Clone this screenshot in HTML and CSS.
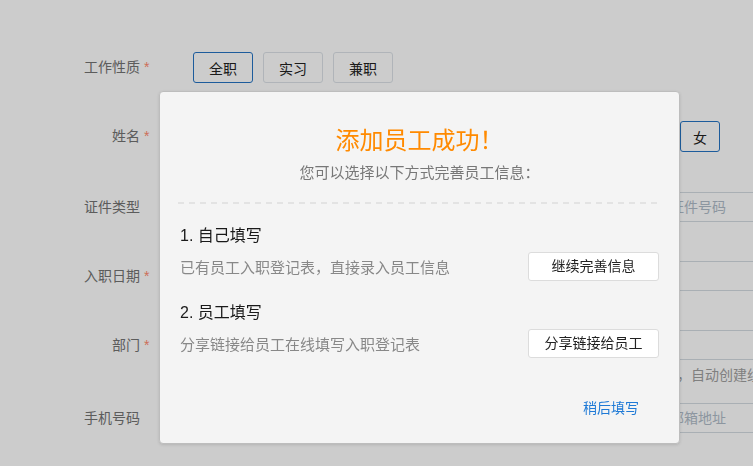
FILE: index.html
```html
<!DOCTYPE html>
<html lang="zh-CN">
<head>
    <meta charset="UTF-8">
    <meta name="viewport" content="width=device-width, initial-scale=1.0">
    <title>添加员工</title>
    <link rel="stylesheet" href="styles.css">
</head>
<body>
    <div class="form">
        <div class="row">
            <label class="label">工作性质</label><span class="star">*</span>
            <div class="field">
                <button class="opt active">全职</button>
                <button class="opt">实习</button>
                <button class="opt">兼职</button>
            </div>
        </div>
        <div class="row row-name">
            <label class="label">姓名</label><span class="star">*</span>
            <div class="field">
                <input class="input input-name" type="text">
                <button class="opt opt-sex">男</button>
                <button class="opt opt-sex active">女</button>
            </div>
        </div>
        <div class="row">
            <label class="label">证件类型</label><span class="star"></span>
            <div class="field">
                <input class="input input-half" type="text">
                <input class="input input-side" type="text" placeholder="证件号码">
            </div>
        </div>
        <div class="row">
            <label class="label">入职日期</label><span class="star">*</span>
            <div class="field">
                <input class="input input-full" type="text">
            </div>
        </div>
        <div class="row row-hint">
            <label class="label">部门</label><span class="star">*</span>
            <div class="field field-col">
                <input class="input input-full" type="text">
                <p class="hint">部门不存在时可直接输入<span class="punc">，</span>自动创建组织</p>
            </div>
        </div>
        <div class="row">
            <label class="label">手机号码</label><span class="star"></span>
            <div class="field">
                <input class="input input-half" type="text">
                <input class="input input-side" type="text" placeholder="邮箱地址">
            </div>
        </div>
    </div>

    <div class="mask"></div>

    <div class="dialog">
        <h2 class="dialog-title">添加员工成功<span class="punc mid">！</span></h2>
        <p class="dialog-sub">您可以选择以下方式完善员工信息<span class="punc mid">：</span></p>
        <div class="dialog-line"></div>

        <div class="way">
            <h3 class="way-title">1. 自己填写</h3>
            <div class="way-row">
                <span class="way-desc">已有员工入职登记表<span class="punc">，</span>直接录入员工信息</span>
                <a href="##" class="way-btn">继续完善信息</a>
            </div>
        </div>
        <div class="way">
            <h3 class="way-title">2. 员工填写</h3>
            <div class="way-row">
                <span class="way-desc">分享链接给员工在线填写入职登记表</span>
                <a href="##" class="way-btn">分享链接给员工</a>
            </div>
        </div>

        <div class="dialog-foot">
            <a href="##" class="later">稍后填写</a>
        </div>
    </div>
</body>
</html>
```

FILE: styles.css
```css
*{
    padding: 0;
    margin: 0;
    box-sizing: border-box;
}

html, body{
    width: 753px;
    height: 466px;
    overflow: hidden;
}

body{
    background-color: #fff;
    font-family: "Liberation Sans", "Noto Sans CJK SC", sans-serif;
    font-size: 14px;
    color: #222;
}

a{
    text-decoration: none;
}

/* 全角标点占满一个字宽 */
.punc{
    display: inline-block;
    width: 1em;
    text-align: left;
}

.punc.mid{
    text-align: center;
}

/* ==================背景表单===================== */
.form{
    padding-top: 52px;
    width: 1100px;
}

.row{
    display: flex;
    align-items: flex-start;
    height: 31px;
    margin-bottom: 38px;
}

.row-name{
    margin-bottom: 40px;
}

.row-hint{
    height: auto;
    margin-bottom: 20px;
}

.label{
    width: 140px;
    text-align: right;
    line-height: 31px;
    color: #737373;
}

.star{
    width: 53px;
    padding-left: 4px;
    line-height: 31px;
    color: #ff8a6e;
}

.field{
    display: flex;
    align-items: center;
}

.field-col{
    flex-direction: column;
    align-items: flex-start;
}

.opt{
    width: 60px;
    height: 31px;
    margin-right: 10px;
    border: 1px solid #dce2e8;
    border-radius: 3px;
    background: #fff;
    font-family: inherit;
    font-size: 14px;
    color: #222;
}

.opt.active{
    border-color: #2574c4;
}

.opt-sex{
    width: 40px;
}

.input{
    height: 30px;
    border: 1px solid #d4dbe2;
    border-radius: 2px;
    padding: 0 10px;
    font-family: inherit;
    font-size: 14px;
    outline: none;
}

.input::placeholder{
    color: #b0bcc8;
}

.input-name{
    width: 417px;
    margin-right: 20px;
}

.input-half{
    width: 446px;
    margin-right: 20px;
}

.input-side{
    width: 300px;
}

.input-full{
    width: 700px;
}

.hint{
    margin-top: 7px;
    margin-left: 330px;
    line-height: 16px;
    color: #a0a0a0;
    white-space: nowrap;
}

/* ==================遮罩与弹窗===================== */
.mask{
    position: fixed;
    top: 0;
    left: 0;
    right: 0;
    bottom: 0;
    background-color: rgba(0, 0, 0, 0.2);
}

.dialog{
    position: absolute;
    top: 91px;
    left: 159px;
    width: 521px;
    height: 353px;
    padding: 0 20px;
    background-color: #f4f4f4;
    border: 1px solid #bdbdbd;
    border-radius: 4px;
    box-shadow: 0 1px 3px rgba(0, 0, 0, 0.12);
}

.dialog-title{
    margin-top: 34px;
    line-height: 30px;
    text-align: center;
    font-size: 24px;
    font-weight: normal;
    color: #ff8a00;
}

.dialog-sub{
    margin-top: 7px;
    line-height: 20px;
    text-align: center;
    font-size: 15px;
    color: #777;
}

.dialog-line{
    height: 2px;
    margin: 19px -2px 0;
    background: repeating-linear-gradient(90deg, #e3e3e3 0 6px, transparent 6px 11px);
}

.way{
    margin-top: 21px;
}

.way-title{
    line-height: 22px;
    font-size: 16px;
    font-weight: normal;
    color: #1a1a1a;
}

.way-row{
    display: flex;
    justify-content: space-between;
    align-items: center;
    margin-top: 5px;
}

.way-desc{
    font-size: 15px;
    color: #888;
}

.way-btn{
    display: block;
    width: 131px;
    height: 29px;
    line-height: 27px;
    text-align: center;
    background-color: #fff;
    border: 1px solid #dcdcdc;
    border-radius: 3px;
    color: #222;
}

.dialog-foot{
    margin-top: 40px;
    text-align: right;
}

.later{
    display: inline-block;
    margin-right: 20px;
    line-height: 20px;
    color: #1f7ad6;
}
```
